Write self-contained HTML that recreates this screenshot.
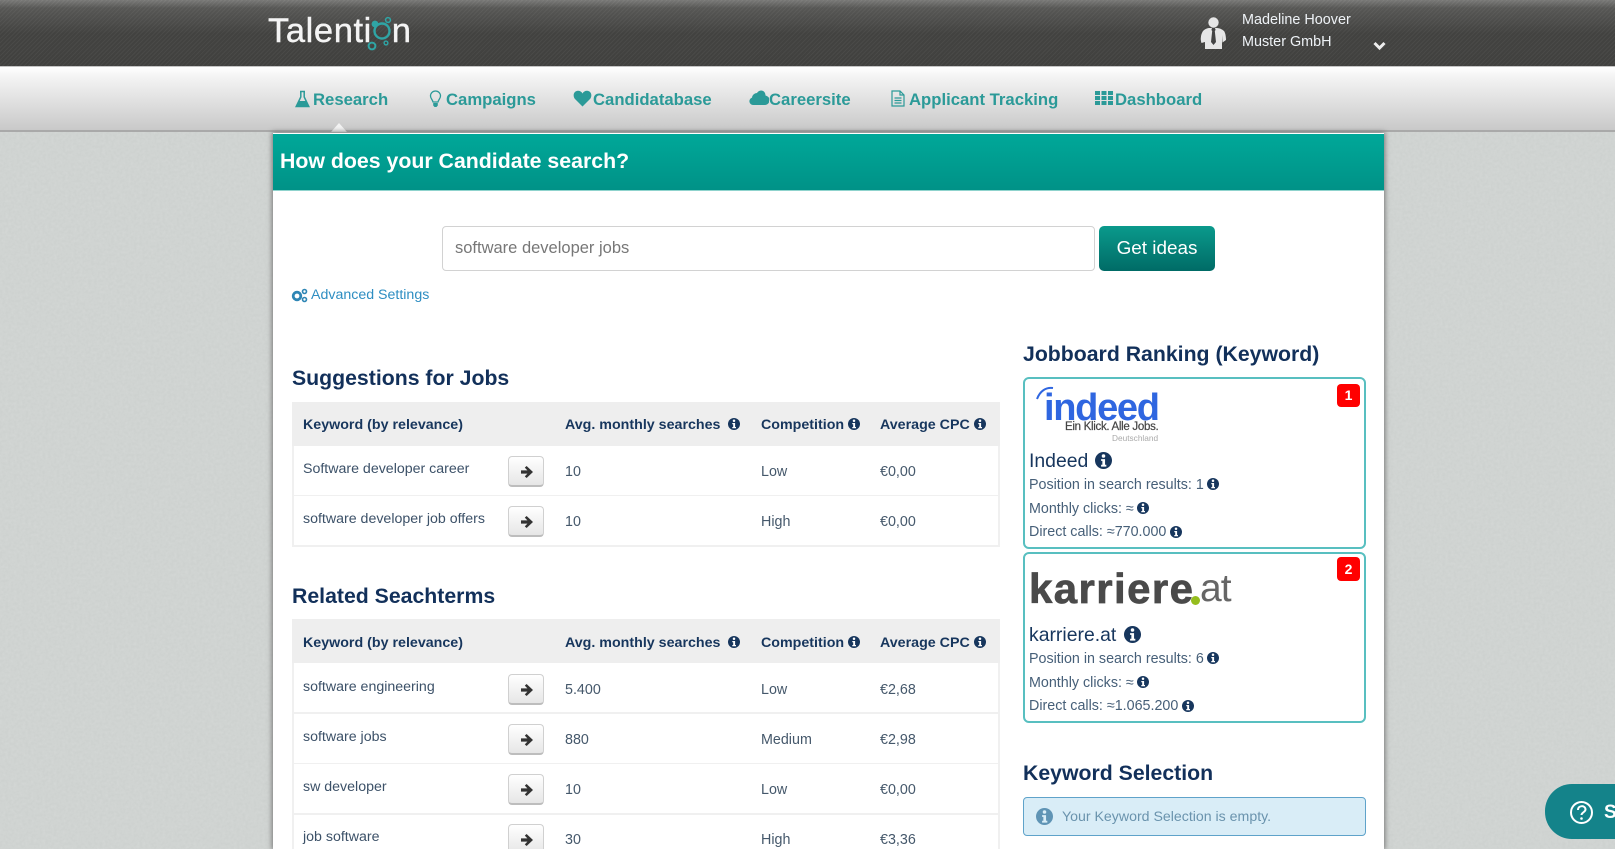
<!DOCTYPE html>
<html lang="en"><head><meta charset="utf-8"><title>Talention</title>
<style>
html,body{margin:0;padding:0;width:1615px;height:849px;overflow:hidden;background:#cdd1cf;font-family:"Liberation Sans",Arial,sans-serif}
#root{position:relative;width:1615px;height:849px;overflow:hidden}
.a{position:absolute}
.t{position:absolute;white-space:nowrap;line-height:20px;height:20px}
.top{left:0;top:0;width:1615px;height:66px;background:repeating-linear-gradient(135deg,rgba(255,255,255,.03) 0 1px,rgba(0,0,0,.03) 1px 3px),linear-gradient(#7d7d7b 0,#5a5a58 8px,#444442 34px,#434341 100%)}
.nav{left:0;top:66px;width:1615px;height:66px;box-sizing:border-box;background:linear-gradient(#fff 0,#f4f4f4 15%,#c9c9c9 100%);border-top:1px solid #c4c4c4;border-bottom:2px solid #a9a9a9}
.n{font-size:16.7px;font-weight:bold;color:#2b9a98;top:89.500px}
.panel{left:273px;top:133px;width:1111px;height:716px;background:#fff;box-shadow:0 0 5px 1px #777}
.ph{left:273px;top:134px;width:1111px;height:57px;background:linear-gradient(#00a899,#009287);border-bottom:1px solid #8fd3cd;box-sizing:border-box}
h2{position:absolute;margin:0;white-space:nowrap;font-size:21.25px;line-height:26px;color:#12305a;font-weight:bold}
.th{background:#eeeeee;left:292px;width:708px;height:44px}
.row{left:292px;width:704px;border:2px solid #f0f0f0;border-top:0;height:49px;background:#fff}
.k{font-size:14.2px;color:#3c5168}
.h{font-size:14.25px;font-weight:bold;color:#17365d}
.v{font-size:14.3px;color:#45586b}
.btn{position:absolute;left:508px;width:36px;height:31px;box-sizing:border-box;border:1px solid #d0d0d0;border-bottom:2px solid #bdbdbd;border-radius:4px;background:linear-gradient(#fff,#e6e6e6)}
.btn svg{position:absolute;left:11px;top:8px}
.card{left:1023px;width:343px;box-sizing:border-box;border:2px solid #58bfc0;border-radius:6px;background:#fff}
.badge{left:1337px;width:23px;border-radius:4px;background:#f00;color:#fff;font-weight:bold;font-size:14px;text-align:center;height:23px;line-height:23px}
.ct{font-size:19.4px;color:#17365d}
.cl{font-size:14.3px;color:#465f78}
svg.i{position:absolute}
</style></head><body>
<div id="root">
<svg class="a" style="left:0;top:0" width="1615" height="849"><filter id="nz"><feTurbulence type="fractalNoise" baseFrequency=".35" numOctaves="2" seed="4"/><feColorMatrix values="0 0 0 0 .77  0 0 0 0 .79  0 0 0 0 .78  .4 0 0 0 -.08"/></filter><rect width="1615" height="849" filter="url(#nz)"/>
<defs>
<symbol id="inf" viewBox="0 0 24 24"><circle cx="12" cy="12" r="12" fill="#17365d"/><circle cx="12" cy="5.600" r="2.500" fill="#fff"/><path d="M8.600 10h5.600v8h1.800v2.600H8.600V18h1.800v-5.400H8.600z" fill="#fff"/></symbol>
<symbol id="arr" viewBox="0 0 14 14"><path d="M1 5.400h6.400L4.800 2.600 6.600 1 13 7l-6.400 6-1.800-1.600 2.600-2.800H1z" fill="#333"/></symbol>
</defs></svg>

<div class="a top"></div>
<div class="t" style="left:268px;top:13px;height:36px;line-height:36px;font-size:34.500px;letter-spacing:.6px;color:#f4f4f4;-webkit-text-stroke:.4px #f4f4f4">Talenti<span style="color:rgba(255,255,255,0);-webkit-text-stroke:0">o</span>n</div>
<svg class="a" style="left:365px;top:12px" width="34" height="42" fill="none" stroke="#2fa5a5"><circle cx="17" cy="19" r="7.500" stroke-width="2.400"/><circle cx="10" cy="12" r="3.400" fill="#2fa5a5" stroke="none"/><circle cx="23" cy="8" r="2.400" stroke-width="1.500"/><circle cx="7" cy="34" r="3.400" stroke-width="2"/><circle cx="21" cy="31" r="1.900" stroke-width="1.400"/></svg>

<svg class="a" style="left:1200px;top:17px" width="27" height="32"><circle cx="13.500" cy="5.500" r="5.200" fill="#e6e6e6"/><path d="M3 14c3-3 6-3 7-3h7c2 0 5 1 7 3 1.500 2 2 6 2 9l-3.500 2.500L22 18v14H5V25l-3.500 1C0 22 1 17 3 14z" fill="#e6e6e6"/><path d="M12 11h3l.6 2-.8 1 1.200 11-2.500 3-2.500-3 1.200-11-.8-1z" fill="#444"/></svg>
<div class="t" style="left:1242px;top:10px;font-size:14.400px;color:#eef2f6">Madeline Hoover</div>
<div class="t" style="left:1242px;top:32px;font-size:14.400px;color:#eef2f6">Muster GmbH</div>
<svg class="a" style="left:1373px;top:41px" width="13" height="10"><path d="M1.500 2l5 5 5-5" fill="none" stroke="#eee" stroke-width="3"/></svg>

<div class="a nav"></div>
<div class="a" style="left:331px;top:123px;width:0;height:0;border-left:8px solid transparent;border-right:8px solid transparent;border-bottom:9px solid #f3f3f3"></div>

<svg class="a" style="left:295px;top:90px" width="15" height="18"><path d="M5 1.500h5M5.800 1.500v5.500L1.200 16.500h12.600L9.200 7V1.500" fill="none" stroke="#2b9a98" stroke-width="1.500"/><path d="M3.500 11h8l2.300 5.500H1.200z" fill="#2b9a98"/></svg>
<div class="t n" style="left:313px">Research</div>
<svg class="a" style="left:429px;top:90px" width="13" height="18"><path d="M6.500 1a5 5 0 0 0-5 5c0 2.500 2 3.500 2.500 6h5c.5-2.500 2.500-3.500 2.500-6a5 5 0 0 0-5-5z" fill="none" stroke="#2b9a98" stroke-width="1.300"/><path d="M4.200 13h4.600v2.500l-1.300 1.500h-2l-1.300-1.500z" fill="#2b9a98"/></svg>
<div class="t n" style="left:446px">Campaigns</div>
<svg class="a" style="left:573px;top:90px" width="19" height="17"><path d="M9.500 16.500 2 9C-.5 6 .5 1 5 .8c2 0 3.500 1 4.500 2.700C10.500 1.800 12 .8 14 .8 18.500 1 19.500 6 17 9z" fill="#2b9a98"/></svg>
<div class="t n" style="left:593px">Candidatabase</div>
<svg class="a" style="left:749px;top:90px" width="20" height="16"><path d="M4 15a3.800 3.800 0 0 1-1-7.400A5 5 0 0 1 8 3a5 5 0 0 1 4-2.500c3 0 4.500 2.500 4.500 5a4.800 4.800 0 0 1-.2 9.500z" fill="#2b9a98"/></svg>
<div class="t n" style="left:769px">Careersite</div>
<svg class="a" style="left:891px;top:90px" width="14" height="17" fill="none" stroke="#2b9a98" stroke-width="1.200"><path d="M1 1h8l4 4v11H1zM9 1v4h4"/><path d="M3.500 8h7M3.500 10.500h7M3.500 13h7"/></svg>
<div class="t n" style="left:909px">Applicant Tracking</div>
<svg class="a" style="left:1095px;top:91px" width="18" height="14" fill="#2b9a98"><path d="M0 0h5v4H0zM6.500 0h5v4h-5zM13 0h5v4h-5zM0 5h5v4H0zM6.500 5h5v4h-5zM13 5h5v4h-5zM0 10h5v4H0zM6.500 10h5v4h-5zM13 10h5v4h-5z"/></svg>
<div class="t n" style="left:1115px">Dashboard</div>

<div class="a panel"></div>
<div class="a ph"></div>
<div class="t" style="left:280px;top:151px;font-size:21.300px;font-weight:bold;color:#fff">How does your Candidate search?</div>

<div class="a" style="left:442px;top:226px;width:653px;height:45px;box-sizing:border-box;border:1px solid #d2d2d2;border-radius:4px;background:#fff"></div>
<div class="t" style="left:455px;top:238px;font-size:16.500px;color:#777">software developer jobs</div>
<div class="a" style="left:1099px;top:226px;width:116px;height:45px;border-radius:5px;background:linear-gradient(#0a9a8c,#006b66);color:#fff;text-align:center;line-height:45px;font-size:18.900px">Get ideas</div>

<svg class="a" style="left:291px;top:288px" width="17" height="15" fill="none" stroke="#2e86b5"><circle cx="6" cy="8" r="3.800" stroke-width="2.800"/><circle cx="13.500" cy="3.500" r="2" stroke-width="1.600"/><circle cx="13.500" cy="11.500" r="2" stroke-width="1.600"/></svg>
<div class="t" style="left:311px;top:285px;font-size:14.200px;color:#2e8ec2">Advanced Settings</div>

<h2 style="left:292px;top:365px">Suggestions for Jobs</h2>
<div class="a th" style="top:402px"></div>
<div class="a row" style="top:446px"></div>
<div class="a row" style="top:496px"></div>
<div class="t h" style="left:303px;top:415px">Keyword (by relevance)</div>
<div class="t h" style="left:565px;top:415px">Avg. monthly searches</div>
<svg class="i" style="left:728px;top:418px" width="12" height="12"><use href="#inf"/></svg>
<div class="t h" style="left:761px;top:415px">Competition</div>
<svg class="i" style="left:848px;top:418px" width="12" height="12"><use href="#inf"/></svg>
<div class="t h" style="left:880px;top:415px">Average CPC</div>
<svg class="i" style="left:974px;top:418px" width="12" height="12"><use href="#inf"/></svg>

<div class="t k" style="left:303px;top:459px">Software developer career</div>
<div class="btn" style="top:456px"><svg width="14" height="14"><use href="#arr"/></svg></div>
<div class="t v" style="left:565px;top:462px">10</div><div class="t v" style="left:761px;top:462px">Low</div><div class="t v" style="left:880px;top:462px">€0,00</div>
<div class="t k" style="left:303px;top:509px">software developer job offers</div>
<div class="btn" style="top:506px"><svg width="14" height="14"><use href="#arr"/></svg></div>
<div class="t v" style="left:565px;top:512px">10</div><div class="t v" style="left:761px;top:512px">High</div><div class="t v" style="left:880px;top:512px">€0,00</div>

<h2 style="left:292px;top:583px">Related Seachterms</h2>
<div class="a th" style="top:619px"></div>
<div class="a row" style="top:663px"></div>
<div class="a row" style="top:714px"></div>
<div class="a row" style="top:764px"></div>
<div class="a row" style="top:815px"></div>
<div class="t h" style="left:303px;top:633px">Keyword (by relevance)</div>
<div class="t h" style="left:565px;top:633px">Avg. monthly searches</div>
<svg class="i" style="left:728px;top:636px" width="12" height="12"><use href="#inf"/></svg>
<div class="t h" style="left:761px;top:633px">Competition</div>
<svg class="i" style="left:848px;top:636px" width="12" height="12"><use href="#inf"/></svg>
<div class="t h" style="left:880px;top:633px">Average CPC</div>
<svg class="i" style="left:974px;top:636px" width="12" height="12"><use href="#inf"/></svg>

<div class="t k" style="left:303px;top:677px">software engineering</div>
<div class="btn" style="top:674px"><svg width="14" height="14"><use href="#arr"/></svg></div>
<div class="t v" style="left:565px;top:680px">5.400</div><div class="t v" style="left:761px;top:680px">Low</div><div class="t v" style="left:880px;top:680px">€2,68</div>
<div class="t k" style="left:303px;top:727px">software jobs</div>
<div class="btn" style="top:724px"><svg width="14" height="14"><use href="#arr"/></svg></div>
<div class="t v" style="left:565px;top:730px">880</div><div class="t v" style="left:761px;top:730px">Medium</div><div class="t v" style="left:880px;top:730px">€2,98</div>
<div class="t k" style="left:303px;top:777px">sw developer</div>
<div class="btn" style="top:774px"><svg width="14" height="14"><use href="#arr"/></svg></div>
<div class="t v" style="left:565px;top:780px">10</div><div class="t v" style="left:761px;top:780px">Low</div><div class="t v" style="left:880px;top:780px">€0,00</div>
<div class="t k" style="left:303px;top:827px">job software</div>
<div class="btn" style="top:824px"><svg width="14" height="14"><use href="#arr"/></svg></div>
<div class="t v" style="left:565px;top:830px">30</div><div class="t v" style="left:761px;top:830px">High</div><div class="t v" style="left:880px;top:830px">€3,36</div>

<h2 style="left:1023px;top:341px">Jobboard Ranking (Keyword)</h2>

<div class="a card" style="top:377px;height:172px"></div>
<div class="a badge" style="top:384px">1</div>
<svg class="a" style="left:1034px;top:384px" width="30" height="20" fill="none"><path d="M3 15C6 7 12 3 19 4" stroke="#2f66e0" stroke-width="2"/></svg>
<div class="t" style="left:1044px;top:386px;height:44px;line-height:44px;font-size:38px;font-weight:bold;color:#2f66e0;letter-spacing:-1.300px">indeed</div>
<div class="t" style="left:1065px;top:417px;font-size:11.500px;color:#444;letter-spacing:-.3px;-webkit-text-stroke:.2px #444">Ein Klick. Alle Jobs.</div>
<div class="t" style="left:1112px;top:428px;font-size:8.300px;color:#aaa">Deutschland</div>
<div class="t ct" style="left:1029px;top:451px">Indeed</div>
<svg class="i" style="left:1095px;top:452px" width="17" height="17"><use href="#inf"/></svg>
<div class="t cl" style="left:1029px;top:474.500px">Position in search results: 1</div>
<svg class="i" style="left:1207px;top:478px" width="12" height="12"><use href="#inf"/></svg>
<div class="t cl" style="left:1029px;top:498.500px">Monthly clicks: ≈</div>
<svg class="i" style="left:1137px;top:502px" width="12" height="12"><use href="#inf"/></svg>
<div class="t cl" style="left:1029px;top:522px">Direct calls: ≈770.000</div>
<svg class="i" style="left:1170px;top:526px" width="12" height="12"><use href="#inf"/></svg>

<div class="a card" style="top:552px;height:171px"></div>
<div class="a badge" style="top:557px;height:24px;line-height:24px">2</div>
<div class="t" style="left:1029px;top:566px;height:46px;line-height:46px;font-size:42px;font-weight:bold;color:#4a4a4a;letter-spacing:1.400px;-webkit-text-stroke:.7px #4a4a4a">karriere</div>
<div class="a" style="left:1191px;top:596px;width:9px;height:9px;border-radius:50%;background:#95bd1e"></div>
<div class="t" style="left:1200px;top:566px;height:46px;line-height:46px;font-size:39px;color:#666;letter-spacing:-1px">at</div>
<div class="t ct" style="left:1029px;top:625px">karriere.at</div>
<svg class="i" style="left:1124px;top:626px" width="17" height="17"><use href="#inf"/></svg>
<div class="t cl" style="left:1029px;top:648.500px">Position in search results: 6</div>
<svg class="i" style="left:1207px;top:652px" width="12" height="12"><use href="#inf"/></svg>
<div class="t cl" style="left:1029px;top:672.500px">Monthly clicks: ≈</div>
<svg class="i" style="left:1137px;top:676px" width="12" height="12"><use href="#inf"/></svg>
<div class="t cl" style="left:1029px;top:696px">Direct calls: ≈1.065.200</div>
<svg class="i" style="left:1182px;top:700px" width="12" height="12"><use href="#inf"/></svg>

<h2 style="left:1023px;top:760px">Keyword Selection</h2>
<div class="a" style="left:1023px;top:797px;width:343px;height:39px;box-sizing:border-box;border:1px solid #5fa3ca;border-radius:4px;background:#d9edf7"></div>
<svg class="i" style="left:1036px;top:808px" width="17" height="17" viewBox="0 0 24 24"><circle cx="12" cy="12" r="12" fill="#5f94b5"/><circle cx="12" cy="5.600" r="2.500" fill="#d9edf7"/><path d="M8.600 10h5.600v8h1.800v2.600H8.600V18h1.800v-5.400H8.600z" fill="#d9edf7"/></svg>
<div class="t" style="left:1062px;top:805.500px;font-size:14.150px;color:#6a93ad">Your Keyword Selection is empty.</div>

<div class="a" style="left:1545px;top:784px;width:110px;height:55px;border-radius:27px;background:#14838a"></div>
<svg class="a" style="left:1569px;top:800px" width="25" height="25" fill="none" stroke="#fff"><circle cx="12.500" cy="12.500" r="10.500" stroke-width="2"/><path d="M9 10c0-5 7.500-5 7.500-.5 0 2.500-4 3-4 5.500" stroke-width="2"/><circle cx="12.500" cy="18.500" r="1.300" fill="#fff" stroke="none"/></svg>
<div class="t" style="left:1604px;top:801px;height:24px;line-height:24px;font-size:19px;font-weight:bold;color:#fff">S</div>
</div>
</body></html>
